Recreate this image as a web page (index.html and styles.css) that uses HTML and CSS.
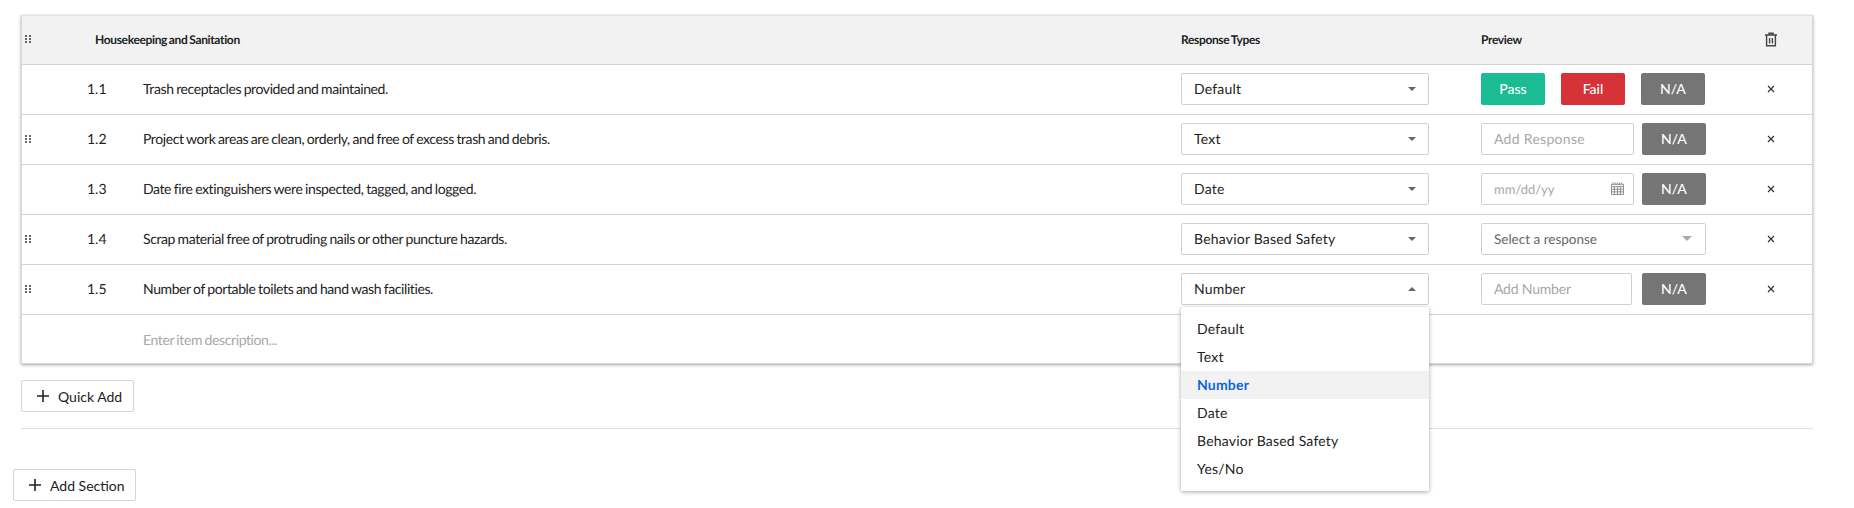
FILE: index.html
```html
<!DOCTYPE html>
<html lang="en">
<head>
  <meta charset="UTF-8">
  <title>Checklist Section</title>
  <link rel="stylesheet" href="styles.css">
</head>
<body>
  <svg class="defs" width="0" height="0">
    <symbol id="grip" viewBox="0 0 6 8"><path d="M0 0h2v2H0zM4 0h2v2H4zM0 3h2v2H0zM4 3h2v2H4zM0 6h2v2H0zM4 6h2v2H4z"/></symbol>
    <symbol id="close" viewBox="0 0 8 8"><path d="M1 1l6 6M7 1L1 7" fill="none" stroke="currentColor" stroke-width="1.2"/></symbol>
    <symbol id="plus" viewBox="0 0 14 14"><path d="M7 1v12M1 7h12" fill="none" stroke="currentColor" stroke-width="1.6"/></symbol>
  </svg>

  <div class="section">
    <div class="card">
      <div class="row row-head">
        <div class="col-grip"><svg class="grip"><use href="#grip"/></svg></div>
        <div class="col-title">Housekeeping and Sanitation</div>
        <div class="col-type">Response Types</div>
        <div class="col-preview">Preview</div>
        <div class="col-action">
          <svg class="trash" viewBox="0 0 14 15">
            <path d="M1 3h12M5 3V1.2h4V3M2.6 3v10.8h8.8V3" fill="none" stroke="#444" stroke-width="1.4"/>
            <path d="M5.6 6v5.5M8.4 6v5.5" fill="none" stroke="#444" stroke-width="1.4"/>
          </svg>
        </div>
      </div>

      <div class="row">
        <div class="col-grip"></div>
        <div class="col-num">1.1</div>
        <div class="col-text">Trash receptacles provided and maintained.</div>
        <div class="col-type"><div class="select">Default<span class="caret"></span></div></div>
        <div class="col-preview">
          <button class="btn btn-pass">Pass</button>
          <button class="btn btn-fail">Fail</button>
          <button class="btn btn-na">N/A</button>
        </div>
        <div class="col-action"><svg class="close"><use href="#close"/></svg></div>
      </div>

      <div class="row">
        <div class="col-grip"><svg class="grip"><use href="#grip"/></svg></div>
        <div class="col-num">1.2</div>
        <div class="col-text">Project work areas are clean, orderly, and free of excess trash and debris.</div>
        <div class="col-type"><div class="select">Text<span class="caret"></span></div></div>
        <div class="col-preview preview-tight">
          <div class="field">Add Response</div>
          <button class="btn btn-na">N/A</button>
        </div>
        <div class="col-action"><svg class="close"><use href="#close"/></svg></div>
      </div>

      <div class="row">
        <div class="col-grip"></div>
        <div class="col-num">1.3</div>
        <div class="col-text">Date fire extinguishers were inspected, tagged, and logged.</div>
        <div class="col-type"><div class="select">Date<span class="caret"></span></div></div>
        <div class="col-preview preview-tight">
          <div class="field field-date">mm/dd/yy
            <svg class="calendar" viewBox="0 0 14 14">
              <path d="M.5 2.5h13v11H.5zM.5 5h13M.5 7.8h13M.5 10.6h13M3.7 5v8.5M7 5v8.5M10.3 5v8.5" fill="none" stroke="#888" stroke-width="1"/>
              <path d="M2 .5v2M4.4 .5v2M6.8 .5v2M9.2 .5v2M11.6 .5v2" fill="none" stroke="#888" stroke-width="1"/>
            </svg>
          </div>
          <button class="btn btn-na">N/A</button>
        </div>
        <div class="col-action"><svg class="close"><use href="#close"/></svg></div>
      </div>

      <div class="row">
        <div class="col-grip"><svg class="grip"><use href="#grip"/></svg></div>
        <div class="col-num">1.4</div>
        <div class="col-text">Scrap material free of protruding nails or other puncture hazards.</div>
        <div class="col-type"><div class="select">Behavior Based Safety<span class="caret"></span></div></div>
        <div class="col-preview">
          <div class="select select-response">Select a response<span class="caret caret-big"></span></div>
        </div>
        <div class="col-action"><svg class="close"><use href="#close"/></svg></div>
      </div>

      <div class="row">
        <div class="col-grip"><svg class="grip"><use href="#grip"/></svg></div>
        <div class="col-num">1.5</div>
        <div class="col-text">Number of portable toilets and hand wash facilities.</div>
        <div class="col-type type-open">
          <div class="select">Number<span class="caret caret-up"></span></div>
          <ul class="menu">
            <li>Default</li>
            <li>Text</li>
            <li class="active">Number</li>
            <li>Date</li>
            <li>Behavior Based Safety</li>
            <li>Yes/No</li>
          </ul>
        </div>
        <div class="col-preview preview-number">
          <div class="field field-number">Add Number</div>
          <button class="btn btn-na">N/A</button>
        </div>
        <div class="col-action"><svg class="close"><use href="#close"/></svg></div>
      </div>

      <div class="row row-new">
        <div class="col-grip"></div>
        <div class="col-num"></div>
        <div class="col-text placeholder">Enter item description...</div>
      </div>
    </div>

    <button class="add-btn quick-add"><svg class="plus"><use href="#plus"/></svg>Quick Add</button>
  </div>

  <button class="add-btn add-section"><svg class="plus"><use href="#plus"/></svg>Add Section</button>
</body>
</html>
```

FILE: styles.css
```css
* {
  box-sizing: border-box;
}
body {
  margin: 0;
  padding: 15px 41px 0 13px;
  font-family: Lato, "Open Sans", sans-serif;
  font-size: 14px;
  color: #222;
  background-color: #ffffff;
  text-rendering: geometricPrecision;
}
.defs {
  position: absolute;
}
.section {
  position: relative;
  margin-left: 8px;
  padding-bottom: 57px;
}
.section::after {
  content: "";
  position: absolute;
  left: 0;
  right: 0;
  bottom: 40px;
  border-bottom: 1px solid #e0e0e0;
}
.card {
  border: 1px solid #d8d8d8;
  border-top-color: #e2e2e2;
  box-shadow: 0 1px 3px rgba(0, 0, 0, 0.35);
}
.row {
  display: flex;
  align-items: center;
  height: 50px;
  padding-bottom: 2px;
  border-bottom: 1px solid #d4d4d4;
}
.row-head {
  height: 49px;
  background-color: #f2f2f2;
  font-size: 12px;
  font-weight: 700;
  letter-spacing: -0.35px;
  word-spacing: -0.8px;
}
.row-new {
  height: 48px;
  padding-bottom: 0;
  padding-top: 1px;
  border-bottom: 0;
}
.col-grip {
  width: 65px;
  padding-left: 3px;
  flex-shrink: 0;
}
.col-title {
  width: 1094px;
  padding-left: 8px;
  flex-shrink: 0;
}
.col-num {
  width: 56px;
  flex-shrink: 0;
}
.col-text {
  width: 1038px;
  flex-shrink: 0;
  word-spacing: -0.6px;
  letter-spacing: -0.4px;
}
.col-type {
  width: 300px;
  flex-shrink: 0;
  position: relative;
}
.col-preview {
  display: flex;
  gap: 16px;
  width: 225px;
  flex-shrink: 0;
}
.preview-tight {
  gap: 8px;
}
.preview-number {
  gap: 10px;
}
.col-action {
  flex: 1;
  display: flex;
  justify-content: center;
  padding-left: 24px;
}
.grip {
  display: block;
  width: 6px;
  height: 8px;
  fill: #666;
}
.close {
  width: 8px;
  height: 8px;
  color: #333;
}
.trash {
  width: 14px;
  height: 15px;
}
.select {
  display: flex;
  align-items: center;
  justify-content: space-between;
  width: 248px;
  height: 32px;
  padding: 0 13px 0 12px;
  border: 1px solid #d0d0d0;
  border-radius: 2px;
  letter-spacing: 0.2px;
  background-color: #fff;
}
.select-response {
  width: 225px;
  font-size: 13.5px;
  letter-spacing: 0;
  color: #666;
}
.caret {
  width: 0;
  height: 0;
  margin-right: -1px;
  border-left: 4px solid transparent;
  border-right: 4px solid transparent;
  border-top: 4px solid #666;
}
.caret-big {
  margin-right: 0;
  border-left-width: 5px;
  border-right-width: 5px;
  border-top: 5px solid #aaa;
}
.caret-up {
  border-top: 0;
  border-bottom: 4px solid #666;
}
.btn {
  width: 64px;
  height: 32px;
  padding: 0;
  border: 0;
  border-radius: 2px;
  font-family: inherit;
  font-size: 14px;
  font-weight: 500;
  color: #fff;
}
.btn-pass {
  background-color: #1abc94;
}
.btn-fail {
  background-color: #d63238;
}
.btn-na {
  background-color: #757575;
}
.field {
  display: flex;
  align-items: center;
  justify-content: space-between;
  flex: 1;
  height: 32px;
  padding: 0 12px;
  border: 1px solid #d0d0d0;
  border-radius: 2px;
  letter-spacing: 0.3px;
  color: #a8a8a8;
}
.field-date {
  font-size: 13px;
  letter-spacing: 0;
}
.field-number {
  letter-spacing: -0.2px;
}
.calendar {
  width: 13px;
  height: 13px;
  margin-right: -3px;
}
.placeholder {
  color: #a8a8a8;
}
.menu {
  position: absolute;
  top: 34px;
  left: 0;
  width: 248px;
  margin: 0;
  padding: 8px 0;
  list-style: none;
  background-color: #fff;
  border-radius: 2px;
  box-shadow: 0 1px 4px rgba(0, 0, 0, 0.35);
  letter-spacing: 0.2px;
  z-index: 5;
}
.menu li {
  height: 28px;
  line-height: 28px;
  padding-left: 16px;
}
.menu .active {
  background-color: #f2f2f2;
  color: #0b65e0;
  font-weight: 700;
}
.add-btn {
  display: flex;
  align-items: center;
  height: 32px;
  padding: 0;
  border: 1px solid #d4d4d4;
  border-radius: 2px;
  background-color: #fff;
  font-family: inherit;
  font-size: 14px;
  color: #222;
}
.plus {
  width: 14px;
  height: 14px;
  margin: 0 8px 0 14px;
  color: #222;
}
.quick-add {
  width: 113px;
  margin-top: 16px;
}
.add-section {
  width: 123px;
}
```
